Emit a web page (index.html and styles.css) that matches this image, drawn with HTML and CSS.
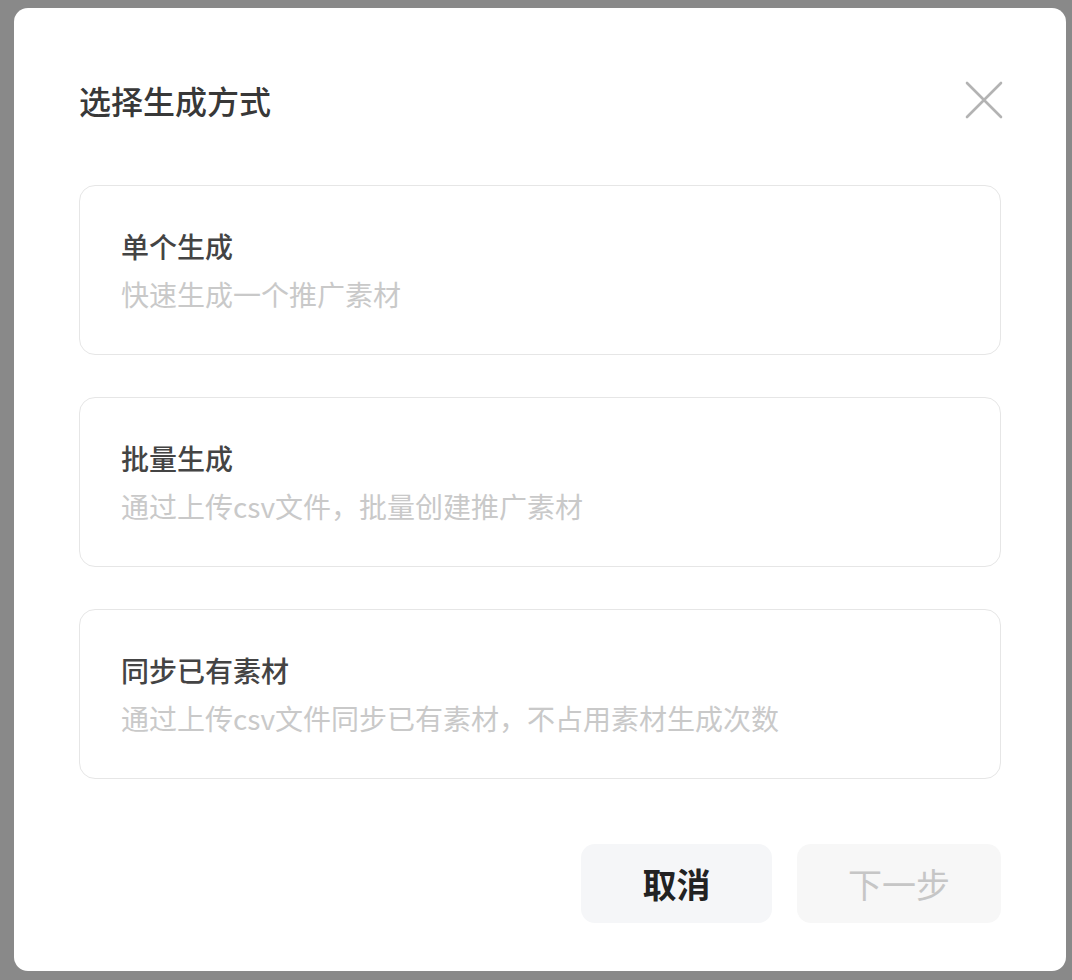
FILE: index.html
```html
<!DOCTYPE html>
<html lang="zh-CN">
<head>
	<meta charset="UTF-8">
	<title>选择生成方式</title>
	<link rel="stylesheet" href="styles.css">
</head>
<body>
	<div class="dialog">
		<div class="dialog-head">
			<div class="dialog-title">选择生成方式</div>
			<span class="dialog-close">
				<svg width="38" height="38" viewBox="0 0 38 38">
					<path d="M2 2L36 36M36 2L2 36" stroke="#b3b3b3" stroke-width="2.6" stroke-linecap="round" fill="none"/>
				</svg>
			</span>
		</div>
		<ul class="mode-list">
			<li class="mode">
				<div class="mode-name">单个生成</div>
				<div class="mode-desc">快速生成一个推广素材</div>
			</li>
			<li class="mode">
				<div class="mode-name">批量生成</div>
				<div class="mode-desc">通过上传csv文件，批量创建推广素材</div>
			</li>
			<li class="mode">
				<div class="mode-name">同步已有素材</div>
				<div class="mode-desc">通过上传csv文件同步已有素材，不占用素材生成次数</div>
			</li>
		</ul>
		<div class="dialog-foot">
			<button class="btn btn-cancel">取消</button>
			<button class="btn btn-next" disabled>下一步</button>
		</div>
	</div>
</body>
</html>
```
FILE: styles.css
```css
body{
	margin: 0;
	padding: 0;
	background-color: #898989;
	font-family: "Noto Sans CJK SC", "Noto Sans", sans-serif;
}
.dialog{
	width: 1052px;
	height: 963px;
	margin: 8px 0 0 14px;
	box-sizing: border-box;
	padding: 68px 65px 0;
	background-color: #fff;
	border-radius: 14px;
}
.dialog-head{
	display: flex;
	justify-content: space-between;
	align-items: center;
	height: 48px;
}
.dialog-title{
	font-size: 32px;
	line-height: 48px;
	font-weight: 500;
	color: #383838;
}
.dialog-close{
	display: flex;
	margin-right: -2px;
}
.mode-list{
	list-style: none;
	margin: 61px 0 0;
	padding: 0;
	display: flex;
	flex-direction: column;
	gap: 42px;
}
.mode{
	border: 1px solid #e6e6e6;
	border-radius: 16px;
	padding: 40px 41px;
}
.mode-name{
	font-size: 28px;
	line-height: 40px;
	font-weight: 500;
	color: #444;
}
.mode-desc{
	margin-top: 8px;
	font-size: 28px;
	line-height: 40px;
	color: #c9c9c9;
}
.dialog-foot{
	display: flex;
	justify-content: flex-end;
	gap: 25px;
	margin-top: 65px;
}
.btn{
	height: 79px;
	border: none;
	border-radius: 14px;
	font-family: inherit;
	font-size: 34px;
	padding: 0;
}
.btn-cancel{
	width: 191px;
	background-color: #f5f6f8;
	color: #222;
	font-weight: 700;
}
.btn-next{
	width: 204px;
	background-color: #f7f7f7;
	color: #c6c6c6;
}
```
